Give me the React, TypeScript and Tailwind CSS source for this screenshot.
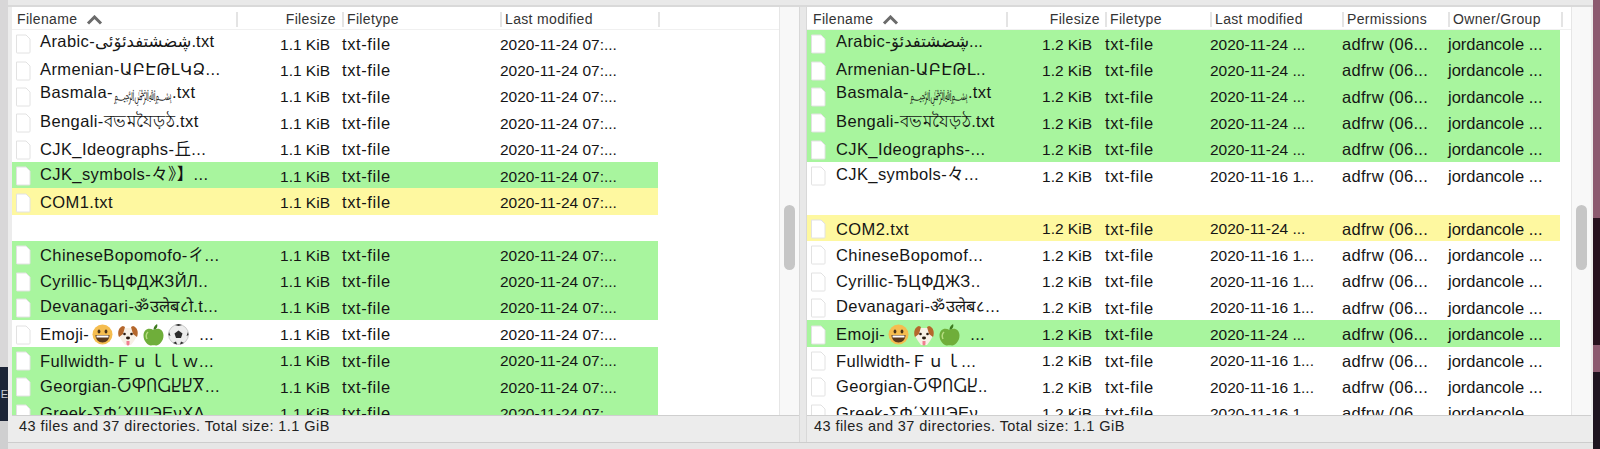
import type { ReactNode } from "react";

type Tint = "green" | "yellow" | "none";

interface FileRow {
  name?: ReactNode;
  lift?: string;
  tint?: Tint;
  date?: string;
}

const tintClass: Record<Tint, string> = {
  green: "bg-[#a8f59e]",
  yellow: "bg-[#fef8a0]",
  none: "bg-white",
};

function FileIcon() {
  return (
    <svg width="16" height="20" viewBox="0 0 16 20" className="shrink-0">
      <path
        d="M1.5 1h9.5l4 4v13.2a.8.8 0 0 1-.8.8H2.3a.8.8 0 0 1-.8-.8z"
        fill="#fff"
        stroke="#e2e2e2"
      />
    </svg>
  );
}

function Chevron() {
  return (
    <svg width="17" height="10" viewBox="0 0 17 10" className="ml-[9px]">
      <path d="M2 8.5 8.5 2 15 8.5" fill="none" stroke="#6b6b6b" strokeWidth="3" />
    </svg>
  );
}

function Smile() {
  return (
    <svg width="21" height="21" viewBox="0 0 21 21" className="shrink-0">
      <circle cx="10.5" cy="10.5" r="10" fill="#f5bd4f" />
      <ellipse cx="7" cy="7.5" rx="1.4" ry="2" fill="#4a3418" />
      <ellipse cx="14" cy="7.5" rx="1.4" ry="2" fill="#4a3418" />
      <path d="M3.5 11h14c0 4.500-3 7.500-7 7.500s-7-3-7-7.500z" fill="#5c3a1c" />
      <path d="M4.500 11.500h12v2h-12z" fill="#fff" />
    </svg>
  );
}

function Dog() {
  return (
    <svg width="22" height="22" viewBox="0 0 22 22" className="shrink-0">
      <path d="M5 4h12l3 8-3 5-3 4H8l-3-4-3-5z" fill="#f7f0e6" />
      <path d="M6 2C2 3 0 8 2 13l4-3 2-7zM16 2c4 1 6 6 4 11l-4-3-2-7z" fill="#b5672c" />
      <circle cx="7.500" cy="10" r="1.300" fill="#2a1a10" />
      <circle cx="14.500" cy="10" r="1.300" fill="#2a1a10" />
      <ellipse cx="11" cy="14" rx="2" ry="1.400" fill="#2a1a10" />
      <path d="M9.500 17h3v3a1.500 1.500 0 0 1-3 0z" fill="#ef7f8f" />
    </svg>
  );
}

function Apple() {
  return (
    <svg width="21" height="23" viewBox="0 0 21 23" className="shrink-0">
      <path d="M10.500 7C6 4 .5 6 .5 12.500S6 23 8 22.500c1.500-.4 3.500-.4 5 0C15 23 20.500 19 20.500 12.500S15 4 10.500 7z" fill="#6fae3a" />
      <path d="M5 9c-2 2-2 5-1 7" fill="none" stroke="#b6dc80" strokeWidth="1.500" />
      <path d="M10.500 7c0-2 .5-4 3.500-6 1 2 0 5-3.500 6z" fill="#3e7a20" />
    </svg>
  );
}

function Ball() {
  return (
    <svg width="21" height="21" viewBox="0 0 21 21" className="shrink-0">
      <circle cx="10.500" cy="10.500" r="10" fill="#ececec" stroke="#9a9a9a" strokeWidth=".5" />
      <path d="M10.500 6.500l4 3-1.500 4.500H8L6.500 9.500z" fill="#2b2b2b" />
      <path d="M7 1l3.500 1L14 1l-3.500-1zM1 8l1.500 4L.5 11zM20 8l-1.500 4 2-1zM5 19l3-1.500 1 3zM16 19l-3-1.500-1 3z" fill="#2b2b2b" />
    </svg>
  );
}

function Basmala() {
  return (
    <>
      Basmala-
      <span className="ml-[1px] mt-[6px] inline-block scale-y-[2] text-[7.500px] tracking-normal">﷽</span>
      .txt
    </>
  );
}

const leftRows: FileRow[] = [
  { name: "Arabic-ڜضشتفدئۆئى.txt", lift: "pb-[5px]" },
  { name: "Armenian-ԱԲԷԹԼԿՁ...", lift: "pb-[2px]" },
  { name: <Basmala />, lift: "pb-[9px]" },
  { name: "Bengali-বভমযৈড়ঠ.txt", lift: "pb-[5px]" },
  { name: "CJK_Ideographs-丘..." },
  { name: "CJK_symbols-々》】...", lift: "pb-[4px]", tint: "green" },
  { name: "COM1.txt", tint: "yellow" },
  {},
  { name: "ChineseBopomofo-ㄔ...", tint: "green" },
  { name: "Cyrillic-ЂЦФДЖЗЙЛ..", tint: "green" },
  { name: "Devanagari-ॐउलेब८ो.t...", lift: "pb-[4px]", tint: "green" },
  {
    name: (
      <>
        Emoji-
        <span className="ml-[3px] flex items-center gap-[4px]">
          <Smile />
          <Dog />
          <Apple />
          <Ball />
        </span>
        <span className="ml-[10px]">...</span>
      </>
    ),
  },
  { name: "Fullwidth-Ｆｕｌｌｗ...", tint: "green" },
  { name: "Georgian-ႠႴႶႺႾႾႿ...", lift: "pb-[2px]", tint: "green" },
  { name: "Greek-ΣΦ΄ΧШЭΕνΧΛ", tint: "green" },
];

const rightRows: FileRow[] = [
  { name: "Arabic-ڜضشتفدئۆ...", lift: "pb-[5px]", tint: "green" },
  { name: "Armenian-ԱԲԷԹԼ..", lift: "pb-[2px]", tint: "green" },
  { name: <Basmala />, lift: "pb-[9px]", tint: "green" },
  { name: "Bengali-বভমযৈড়ঠ.txt", lift: "pb-[5px]", tint: "green" },
  { name: "CJK_Ideographs-...", tint: "green" },
  { name: "CJK_symbols-々...", lift: "pb-[4px]", date: "2020-11-16 1..." },
  {},
  { name: "COM2.txt", tint: "yellow" },
  { name: "ChineseBopomof...", date: "2020-11-16 1..." },
  { name: "Cyrillic-ЂЦФДЖЗ..", date: "2020-11-16 1..." },
  { name: "Devanagari-ॐउलेब८...", lift: "pb-[4px]", date: "2020-11-16 1..." },
  {
    name: (
      <>
        Emoji-
        <span className="ml-[3px] flex items-center gap-[4px]">
          <Smile />
          <Dog />
          <Apple />
        </span>
        <span className="ml-[10px]">...</span>
      </>
    ),
    tint: "green",
  },
  { name: "Fullwidth-Ｆｕｌ...", date: "2020-11-16 1..." },
  { name: "Georgian-ႠႴႶႺႾ..", lift: "pb-[2px]", date: "2020-11-16 1..." },
  { name: "Greek-ΣΦ΄ΧШЭΕν", date: "2020-11-16 1..." },
];

function HeaderCell({ label, className }: { label?: string; className: string }) {
  return (
    <div className={`flex shrink-0 items-center ${className}`}>
      <span className="mr-[3px] h-[15px] w-[2px] shrink-0 bg-[#e4e4e4]" />
      {label}
    </div>
  );
}

function Scrollbar() {
  return (
    <div className="w-[20px] shrink-0 border-l border-[#e6e6e6] bg-[#f8f8f8] px-[4px] pt-[198px]">
      <div className="h-[65px] w-[11px] rounded-full bg-[#c6c6c6]" />
    </div>
  );
}

function StatusBar() {
  return (
    <div className="flex h-[27px] shrink-0 items-center border-t border-[#cfcfcf] pb-[4px] pl-[7px] text-[14.500px] tracking-[0.03em] text-[#222]">
      43 files and 37 directories. Total size: 1.1 GiB
    </div>
  );
}

function LeftPanel() {
  return (
    <div className="flex w-[791px] shrink-0 flex-col pl-[4px]">
      <div className="flex min-h-0 flex-1">
        <div className="flex min-w-0 flex-1 flex-col bg-white">
          <div className="flex h-[23px] shrink-0 border-b border-[#f0f0f0] pt-[3px] text-[14px] tracking-[0.025em] text-[#333]">
            <div className="flex w-[224px] shrink-0 items-center pl-[5px]">
              Filename
              <Chevron />
            </div>
            <HeaderCell label="Filesize" className="w-[106px] justify-between pr-[6px]" />
            <HeaderCell label="Filetype" className="w-[158px]" />
            <HeaderCell label="Last modified" className="w-[158px]" />
            <HeaderCell className="flex-1" />
          </div>
          <div className="min-h-0 flex-1 overflow-hidden text-[15.500px] text-[#151515]">
            {leftRows.map((row, i) => (
              <div key={i} className={`flex h-[26.400px] w-[646px] items-center pt-[2px] ${tintClass[row.tint ?? "none"]}`}>
                {row.name && (
                  <>
                    <div className="flex w-[224px] shrink-0 items-center pl-[3px]">
                      <FileIcon />
                      <span className={`ml-[9px] flex items-center whitespace-nowrap text-[16.500px] tracking-[0.4px] ${row.lift ?? ""}`}>{row.name}</span>
                    </div>
                    <div className="w-[106px] shrink-0 pr-[12px] text-right">1.1 KiB</div>
                    <div className="w-[158px] shrink-0 text-[16.500px] tracking-[0.6px]">txt-file</div>
                    <div className="w-[158px] shrink-0">2020-11-24 07:...</div>
                  </>
                )}
              </div>
            ))}
          </div>
        </div>
        <Scrollbar />
      </div>
      <StatusBar />
    </div>
  );
}

function RightPanel() {
  return (
    <div className="flex min-w-0 flex-1 flex-col">
      <div className="flex min-h-0 flex-1">
        <div className="flex min-w-0 flex-1 flex-col bg-white">
          <div className="flex h-[23px] shrink-0 border-b border-[#f0f0f0] pt-[3px] text-[14px] tracking-[0.025em] text-[#333]">
            <div className="flex w-[199px] shrink-0 items-center pl-[6px]">
              Filename
              <Chevron />
            </div>
            <HeaderCell label="Filesize" className="w-[99px] justify-between pr-[5px]" />
            <HeaderCell label="Filetype" className="w-[105px]" />
            <HeaderCell label="Last modified" className="w-[132px]" />
            <HeaderCell label="Permissions" className="w-[106px]" />
            <HeaderCell label="Owner/Group" className="w-[113px]" />
            <HeaderCell className="flex-1" />
          </div>
          <div className="min-h-0 flex-1 overflow-hidden text-[15.500px] text-[#151515]">
            {rightRows.map((row, i) => (
              <div key={i} className={`flex h-[26.400px] w-[753px] items-center pt-[2px] ${tintClass[row.tint ?? "none"]}`}>
                {row.name && (
                  <>
                    <div className="flex w-[199px] shrink-0 items-center pl-[3px]">
                      <FileIcon />
                      <span className={`ml-[10px] flex items-center whitespace-nowrap text-[16.500px] tracking-[0.4px] ${row.lift ?? ""}`}>{row.name}</span>
                    </div>
                    <div className="w-[99px] shrink-0 pr-[13px] text-right">1.2 KiB</div>
                    <div className="w-[105px] shrink-0 text-[16.500px] tracking-[0.6px]">txt-file</div>
                    <div className="w-[132px] shrink-0">{row.date ?? "2020-11-24 ..."}</div>
                    <div className="w-[106px] shrink-0 text-[16.500px] tracking-[0.3px]">adfrw (06...</div>
                    <div className="w-[112px] shrink-0 whitespace-nowrap text-[16.500px]">jordancole ...</div>
                  </>
                )}
              </div>
            ))}
          </div>
        </div>
        <Scrollbar />
      </div>
      <StatusBar />
    </div>
  );
}

export default function App() {
  return (
    <div className="flex h-[449px] w-[1600px] overflow-hidden bg-[#d6d5d6] font-['Liberation_Sans','DejaVu_Sans','Noto_Sans_CJK_SC',sans-serif]">
      <div className="flex w-[8px] shrink-0 flex-col">
        <div className="h-[367px] bg-[#d8d7d8]" />
        <div className="flex h-[54px] items-center justify-end overflow-hidden bg-[#1c2436] text-[11px] leading-none text-[#c8ccd4]">
          E
        </div>
        <div className="flex-1 bg-[#cfcfd0]" />
      </div>
      <div className="flex min-w-0 flex-1 flex-col bg-[#ececec]">
        <div className="h-[7px] shrink-0 border-b-2 border-[#d9d9d9] bg-[#e9e9e9]" />
        <div className="flex min-h-0 flex-1">
          <LeftPanel />
          <div className="w-[8px] shrink-0 border-x border-[#d8d8d8] bg-[#e8e8e8]" />
          <RightPanel />
          <div className="w-[2px] shrink-0" />
        </div>
        <div className="h-[7px] shrink-0 border-t border-[#cdcdcd] bg-[#e6e6e6]" />
      </div>
      <div className="flex w-[7px] shrink-0 flex-col">
        <div className="h-[218px] bg-[#8c5a70]" />
        <div className="h-[127px] bg-[#27121f]" />
        <div className="h-[27px] bg-[#8c5a70]" />
        <div className="flex-1 bg-[#1e1420]" />
      </div>
    </div>
  );
}
